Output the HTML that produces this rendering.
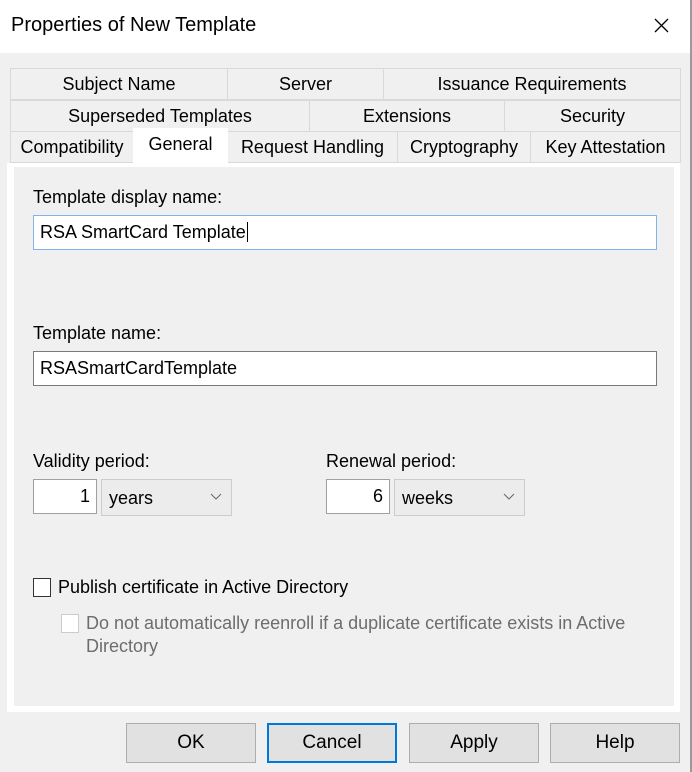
<!DOCTYPE html><html><head><style>
*{box-sizing:border-box;margin:0;padding:0}
body{width:692px;height:772px;background:#f0f0f0;font-family:"Liberation Sans",sans-serif;font-size:18px;color:#000;position:relative;overflow:hidden}
.a{position:absolute}
.tab{position:absolute;height:32px;border:1px solid #d9d9d9;background:#f0f0f0;text-align:center;line-height:30px;font-size:18px}
.inp{position:absolute;background:#fff;border:1px solid #7a7a7a;padding-left:6px;line-height:32px}
.cb{position:absolute;background:#ececec;border:1px solid #cccccc}
.btn{position:absolute;top:723px;width:130px;height:40px;background:#e1e1e1;border:1px solid #adadad;text-align:center;line-height:38px;font-size:19px}
.lbl{position:absolute;font-size:18px}
</style></head><body>
<div class="a" style="left:0;top:0;width:692px;height:53px;background:#fff"></div>
<div class="a" style="left:11px;top:14px;font-size:20px">Properties of New Template</div>
<svg class="a" style="left:654px;top:18px" width="15" height="15"><path d="M1 1L14 14M14 1L1 14" stroke="#000" stroke-width="1.3"/></svg>
<div class="a" style="left:690px;top:0;width:2px;height:772px;background:#9a9a9a"></div>

<div class="tab" style="left:10px;top:68px;width:218px">Subject Name</div>
<div class="tab" style="left:227px;top:68px;width:157px">Server</div>
<div class="tab" style="left:383px;top:68px;width:298px">Issuance Requirements</div>
<div class="tab" style="left:10px;top:100px;width:300px">Superseded Templates</div>
<div class="tab" style="left:309px;top:100px;width:196px">Extensions</div>
<div class="tab" style="left:504px;top:100px;width:177px">Security</div>
<div class="tab" style="left:10px;top:131px;width:124px">Compatibility</div>
<div class="tab" style="left:227px;top:131px;width:171px">Request Handling</div>
<div class="tab" style="left:397px;top:131px;width:134px">Cryptography</div>
<div class="tab" style="left:530px;top:131px;width:151px">Key Attestation</div>

<div class="a" style="left:7px;top:163px;width:673px;height:549px;background:#fff"></div>
<div class="a" style="left:133px;top:128px;width:95px;height:40px;background:#fff;text-align:center;line-height:32px">General</div>
<div class="a" style="left:14px;top:167px;width:660px;height:539px;background:#f0f0f0"></div>

<div class="lbl" style="left:33px;top:187px">Template display name:</div>
<div class="inp" style="left:33px;top:215px;width:624px;height:35px;border-color:#7eb4ea">RSA SmartCard Template<span style="border-left:1px solid #000;margin-left:1px"></span></div>
<div class="lbl" style="left:33px;top:323px">Template name:</div>
<div class="inp" style="left:33px;top:351px;width:624px;height:35px">RSASmartCardTemplate</div>

<div class="lbl" style="left:33px;top:451px">Validity period:</div>
<div class="inp" style="left:33px;top:479px;width:64px;height:35px;text-align:right;padding-right:6px;border-color:#a0a0a0">1</div>
<div class="cb" style="left:101px;top:479px;width:131px;height:37px;padding-left:7px;line-height:36px">years</div>
<svg class="a" style="left:210px;top:493px" width="12" height="8"><path d="M1 1L6 6L11 1" stroke="#666" fill="none"/></svg>
<div class="lbl" style="left:326px;top:451px">Renewal period:</div>
<div class="inp" style="left:326px;top:479px;width:64px;height:35px;text-align:right;padding-right:6px;border-color:#a0a0a0">6</div>
<div class="cb" style="left:394px;top:479px;width:131px;height:37px;padding-left:7px;line-height:36px">weeks</div>
<svg class="a" style="left:503px;top:493px" width="12" height="8"><path d="M1 1L6 6L11 1" stroke="#666" fill="none"/></svg>

<div class="a" style="left:33px;top:578px;width:18px;height:19px;border:1px solid #333;background:#fff"></div>
<div class="lbl" style="left:58px;top:577px">Publish certificate in Active Directory</div>
<div class="a" style="left:61px;top:614px;width:18px;height:19px;border:1px solid #ccc;background:#fff"></div>
<div class="lbl" style="left:86px;top:612px;color:#6d6d6d;line-height:23px;width:570px">Do not automatically reenroll if a duplicate certificate exists in Active Directory</div>

<div class="btn" style="left:126px">OK</div>
<div class="btn" style="left:267px;border:2px solid #0078d7;line-height:36px">Cancel</div>
<div class="btn" style="left:409px">Apply</div>
<div class="btn" style="left:550px">Help</div>
</body></html>
